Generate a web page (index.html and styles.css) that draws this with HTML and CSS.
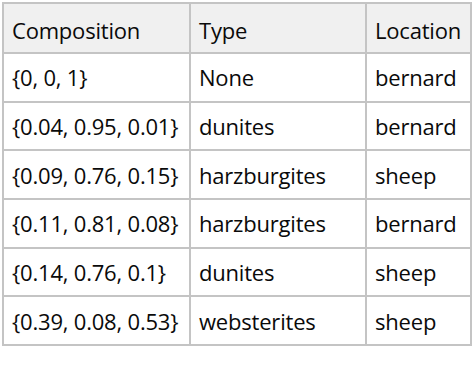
FILE: index.html
```html
<!DOCTYPE html>
<html>
<head>
<meta charset="utf-8">
<link rel="stylesheet" href="styles.css">
</head>
<body>
<table class="grid">
  <colgroup>
    <col class="c1"><col class="c2"><col class="c3">
  </colgroup>
  <thead>
    <tr><th>Composition</th><th>Type</th><th>Location</th></tr>
  </thead>
  <tbody>
    <tr><td>{0, 0, 1}</td><td>None</td><td>bernard</td></tr>
    <tr><td>{0.04, 0.95, 0.01}</td><td>dunites</td><td>bernard</td></tr>
    <tr><td>{0.09, 0.76, 0.15}</td><td>harzburgites</td><td>sheep</td></tr>
    <tr><td>{0.11, 0.81, 0.08}</td><td>harzburgites</td><td>bernard</td></tr>
    <tr><td>{0.14, 0.76, 0.1}</td><td>dunites</td><td>sheep</td></tr>
    <tr><td>{0.39, 0.08, 0.53}</td><td>websterites</td><td>sheep</td></tr>
  </tbody>
</table>
</body>
</html>
```

FILE: styles.css
```css
html, body {
  margin: 0;
  padding: 0;
  background: #ffffff;
}
body {
  padding: 2px 0 0 2px;
  font-family: "Open Sans", "Noto Sans", sans-serif;
  color: #0a0a0a;
}
.grid {
  border-collapse: separate;
  border-spacing: 0;
  table-layout: fixed;
  width: 470px;
  border-top: 2px solid #c4c4c4;
  border-left: 2px solid #c4c4c4;
}
.c1 { width: 187px; }
.c2 { width: 176px; }
.c3 { width: 105px; }
.grid th,
.grid td {
  box-sizing: border-box;
  border-right: 2px solid #c4c4c4;
  border-bottom: 2px solid #c4c4c4;
  padding: 0 0 0 8px;
  text-align: left;
  font-weight: 400;
  font-size: 22px;
  letter-spacing: -0.2px;
  white-space: nowrap;
  vertical-align: middle;
}
.grid th {
  height: 50px;
  background: #f0f0f0;
  padding-top: 4px;
}
.grid td {
  height: 48.7px;
}
```
